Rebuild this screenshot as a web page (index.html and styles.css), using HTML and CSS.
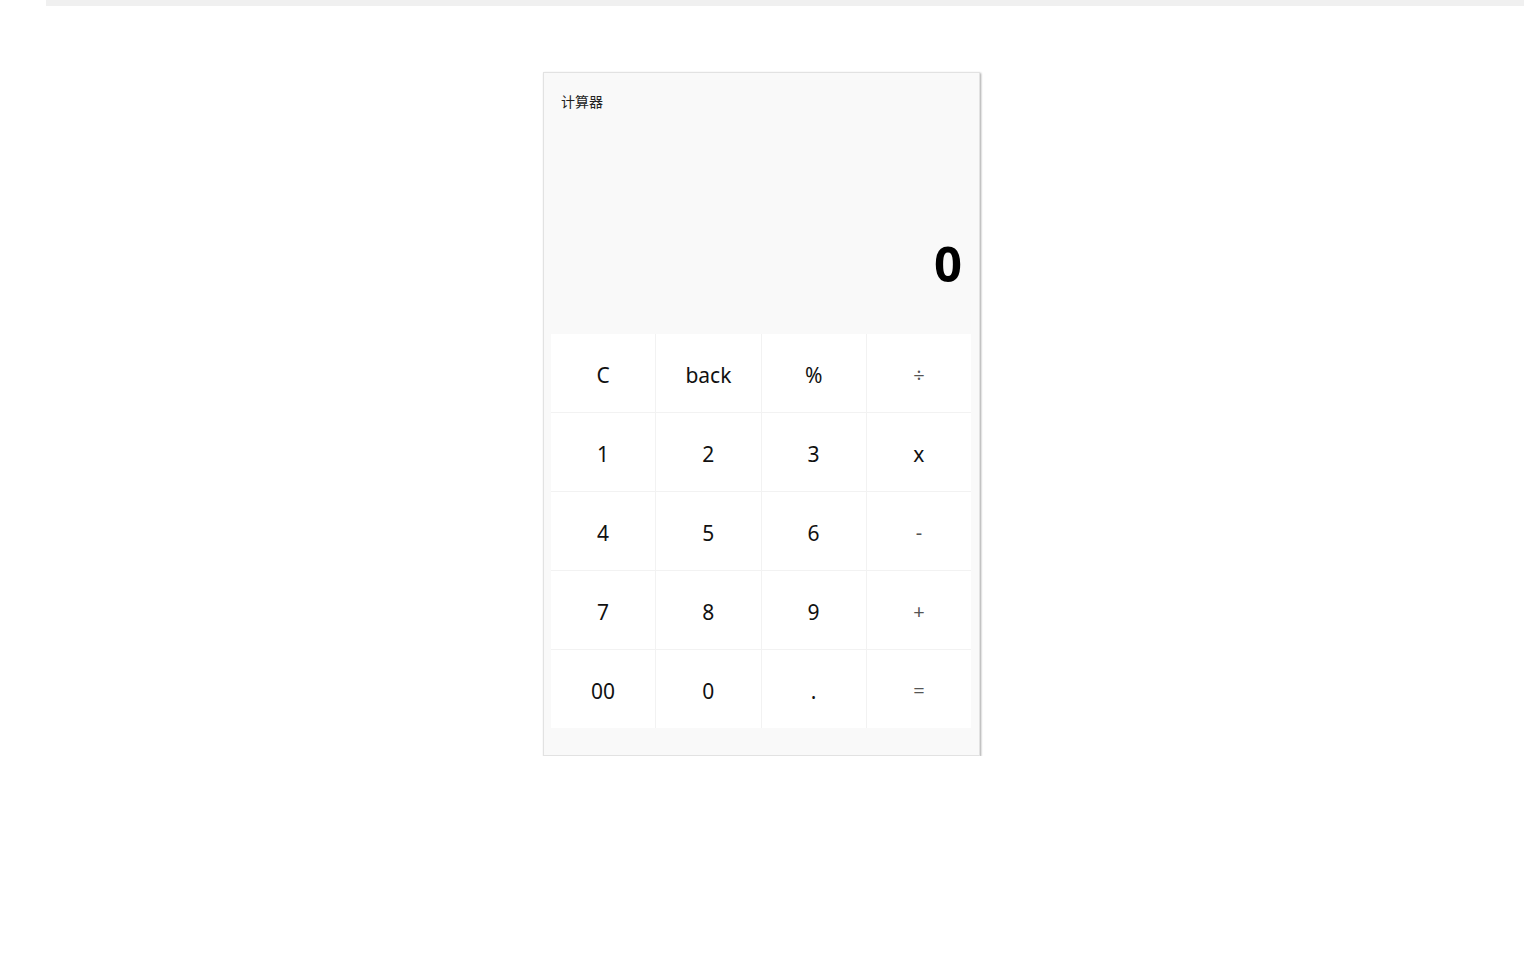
FILE: index.html
```html
<!DOCTYPE html>
<html lang="zh">
<head>
<meta charset="utf-8">
<title>计算器</title>
<link rel="stylesheet" href="styles.css">
</head>
<body>
<div class="topbar"></div>
<div class="calc">
  <div class="display">
    <div class="title">计算器</div>
    <div class="value">0</div>
  </div>
  <div class="keys">
    <div class="key">C</div>
    <div class="key">back</div>
    <div class="key">%</div>
    <div class="key op">÷</div>
    <div class="key">1</div>
    <div class="key">2</div>
    <div class="key">3</div>
    <div class="key">x</div>
    <div class="key">4</div>
    <div class="key">5</div>
    <div class="key">6</div>
    <div class="key op">-</div>
    <div class="key">7</div>
    <div class="key">8</div>
    <div class="key">9</div>
    <div class="key op">+</div>
    <div class="key">00</div>
    <div class="key">0</div>
    <div class="key">.</div>
    <div class="key op">=</div>
  </div>
</div>
</body>
</html>
```

FILE: styles.css
```css
html, body {
  margin: 0;
  padding: 0;
  background: #ffffff;
  font-family: "Noto Sans", "Noto Sans CJK SC", sans-serif;
}

.topbar {
  margin-left: 46px;
  height: 6px;
  background: #f0f0f0;
}

.calc {
  width: 437px;
  height: 684px;
  box-sizing: border-box;
  margin: 66px 0 0 543px;
  background: #f9f9f9;
  border: 1px solid #e2e2e2;
  box-shadow: 1px 1px 2px #a8a8a8;
  padding: 0 8px 0 7px;
  display: flex;
  flex-direction: column;
}

.display {
  height: 261px;
  display: flex;
  flex-direction: column;
  justify-content: space-between;
}

.title {
  margin-top: 18px;
  padding-left: 10px;
  font-family: "Noto Sans CJK SC", sans-serif;
  font-size: 14px;
  color: #222;
}

.value {
  text-align: right;
  padding-right: 9px;
  margin-bottom: 46px;
  font-size: 49px;
  font-weight: 700;
  line-height: 1;
  color: #000;
}

.keys {
  display: grid;
  grid-template-columns: repeat(4, 1fr);
  grid-auto-rows: 78px;
  gap: 1px;
  background: #f2f2f2;
}

.key {
  background: #ffffff;
  display: flex;
  align-items: center;
  justify-content: center;
  padding-top: 3px;
  font-size: 21px;
  color: #111;
}

.key.op {
  color: #555;
  font-size: 20px;
}
```
